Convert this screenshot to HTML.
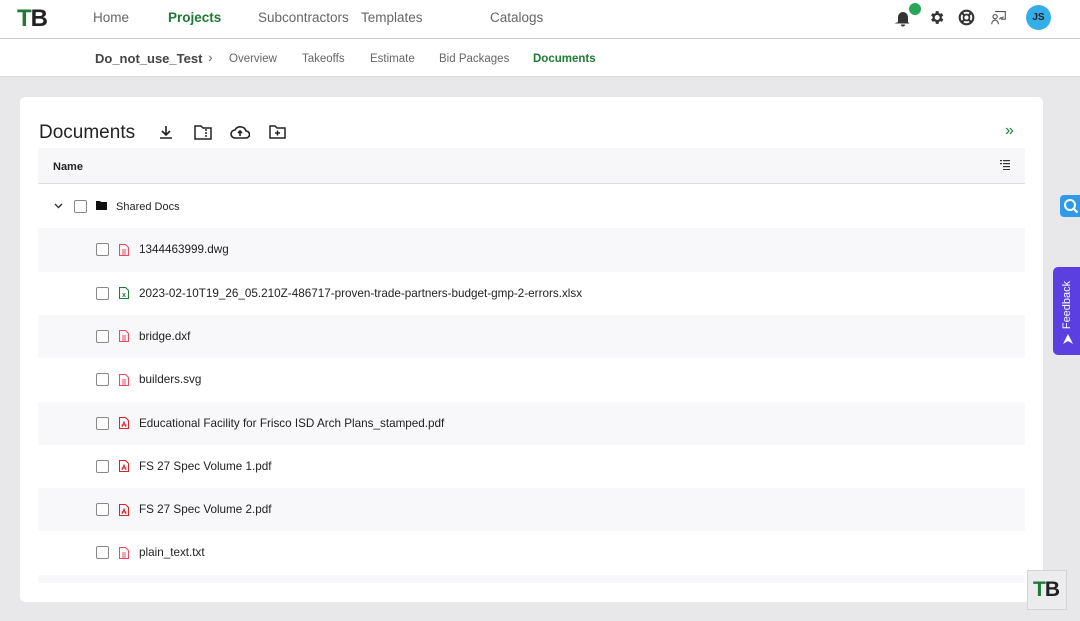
<!DOCTYPE html><html><head><style>
*{box-sizing:border-box;margin:0;padding:0}
body{width:1080px;height:621px;overflow:hidden;background:#e8e8eb;font-family:"Liberation Sans",sans-serif;position:relative}
.top{position:absolute;left:0;top:0;width:1080px;height:39px;background:#fff;border-bottom:1.5px solid #c9c9cf}
.logo{position:absolute;left:17px;top:5px;font-size:24px;font-weight:bold;letter-spacing:-1px}
.nav{position:absolute;top:10px;font-size:13.5px;color:#666}
.sub{position:absolute;left:0;top:39px;width:1080px;height:38px;background:#fff;border-bottom:1px solid #d8d8dc}
.s{position:absolute;top:14px;font-size:11.5px;color:#666}
.card{position:absolute;left:20px;top:97px;width:1023px;height:505px;background:#fff;border-radius:5px;overflow:hidden}
.row{position:absolute;left:18px;width:987px;height:43.3px}
.row.g{background:#f8f8fa}
.cb{position:absolute;width:13px;height:13px;border:1.5px solid #888;border-radius:2px;background:#fff}
.t{position:absolute;font-size:11.7px;color:#222}
.fi{position:absolute;width:10px;height:12px}
</style></head><body>
<div class="top">
<div class="logo"><span style="color:#1f7a34">T</span><span style="color:#222">B</span></div>
<div class="nav" style="left:93px">Home</div>
<div class="nav" style="left:168px;color:#1f7a34;font-weight:bold">Projects</div>
<div class="nav" style="left:258px">Subcontractors</div>
<div class="nav" style="left:361px">Templates</div>
<div class="nav" style="left:490px">Catalogs</div>
<svg style="position:absolute;left:894px;top:9px" width="18" height="18" viewBox="0 0 18 18"><path d="M4 13V8a5 5 0 0 1 10 0v5l1.5 1.5h-15z M7 15.5h4a2 2 0 0 1-4 0z" fill="#333"/></svg>
<div style="position:absolute;left:909px;top:3px;width:12px;height:12px;border-radius:6px;background:#2aa55a"></div>
<svg style="position:absolute;left:928px;top:9px" width="17" height="17" viewBox="0 0 24 24"><path fill="#333" d="M19.4 13a7.5 7.5 0 0 0 0-2l2.1-1.6-2-3.5-2.5 1a7 7 0 0 0-1.7-1L15 3h-4l-.4 2.9a7 7 0 0 0-1.7 1l-2.5-1-2 3.5L6.6 11a7.5 7.5 0 0 0 0 2l-2.1 1.6 2 3.5 2.5-1a7 7 0 0 0 1.7 1L11 21h4l.4-2.9a7 7 0 0 0 1.7-1l2.5 1 2-3.5zM13 15.5a3.5 3.5 0 1 1 0-7 3.5 3.5 0 0 1 0 7z"/></svg>
<svg style="position:absolute;left:958px;top:9px" width="17" height="17" viewBox="0 0 20 20"><circle cx="10" cy="10" r="8" fill="none" stroke="#333" stroke-width="2.5"/><circle cx="10" cy="10" r="3.5" fill="none" stroke="#333" stroke-width="2"/><path d="M4 4l3.5 3.5M16 4l-3.5 3.5M4 16l3.5-3.5M16 16l-3.5-3.5" stroke="#333" stroke-width="2.5"/></svg>
<svg style="position:absolute;left:990px;top:9px" width="17" height="17" viewBox="0 0 20 20" fill="none" stroke="#555" stroke-width="1.3"><path d="M6 3h12v9h-5"/><circle cx="6" cy="9" r="2.5"/><path d="M2 18c0-3 2-5 4-5s4 2 4 5M11 12l2-2 1 1 2-2"/></svg>
<div style="position:absolute;left:1026px;top:5px;width:25px;height:25px;border-radius:13px;background:#34aee8;color:#222;font-size:10px;font-weight:bold;text-align:center;line-height:25px">JS</div>
</div>
<div class="sub">
<div class="s" style="left:95px;top:12px;font-size:13px;font-weight:bold;color:#444">Do_not_use_Test</div>
<div class="s" style="left:208px;top:10px;font-size:14px;color:#666">›</div>
<div class="s" style="left:229px">Overview</div>
<div class="s" style="left:302px">Takeoffs</div>
<div class="s" style="left:370px">Estimate</div>
<div class="s" style="left:439px">Bid Packages</div>
<div class="s" style="left:533px;color:#1f7a34;font-weight:bold">Documents</div>
</div>
<div class="card">
<div style="position:absolute;left:19px;top:25px;font-size:19px;color:#222">Documents</div>
<svg style="position:absolute;left:139px;top:28px" width="14" height="14" viewBox="0 0 14 14" stroke="#222" stroke-width="1.6" fill="none"><path d="M7 1v8M3 6l4 4 4-4M1 13h12"/></svg>
<svg style="position:absolute;left:174px;top:27px" width="18" height="16" viewBox="0 0 18 16" stroke="#222" stroke-width="1.5" fill="none"><path d="M1 2h6l2 2h8v11H1z"/><path d="M11 6h2M11 9h2M11 12h2" /></svg>
<svg style="position:absolute;left:210px;top:27px" width="20" height="15" viewBox="0 0 20 15" stroke="#222" stroke-width="1.6" fill="none"><path d="M5 14a4 4 0 0 1 0-8 6 6 0 0 1 11 1 3.5 3.5 0 0 1 0 7z"/><path d="M10 12V7M8 9l2-2 2 2"/></svg>
<svg style="position:absolute;left:249px;top:28px" width="17" height="14" viewBox="0 0 17 14" stroke="#222" stroke-width="1.5" fill="none"><path d="M1 1h5l2 2h8v10H1z"/><path d="M8.5 5.5v5M6 8h5"/></svg>
<div style="position:absolute;left:985px;top:25px;color:#1f7a34;font-size:16px">»</div>
<div style="position:absolute;left:18px;top:51px;width:987px;height:36px;background:#f7f7f9;border-bottom:1px solid #ddd"></div>
<div class="t" style="left:33px;top:64px;font-weight:bold;font-size:11px">Name</div>
<svg style="position:absolute;left:980px;top:63px" width="10" height="10" viewBox="0 0 10 10" fill="#333"><rect x="0" y="0" width="2" height="1.2"/><rect x="3" y="0" width="7" height="1.2"/><rect x="3" y="3" width="7" height="1.2"/><rect x="3" y="6" width="7" height="1.2"/><rect x="3" y="9" width="7" height="1"/><rect x="0" y="3" width="2" height="1.2"/></svg>
<svg style="position:absolute;left:34px;top:106px" width="9" height="6" viewBox="0 0 9 6"><path d="M1 1l3.5 3.5L8 1" stroke="#333" stroke-width="1.4" fill="none"/></svg>
<div class="cb" style="left:54px;top:103px"></div>
<svg style="position:absolute;left:76px;top:104px" width="11" height="9" viewBox="0 0 11 9"><path d="M0 0h4l1 1h6v8H0z" fill="#111"/></svg>
<div class="t" style="left:96px;top:104px;font-size:11px">Shared Docs</div>
<div id="rows"></div>
</div>
<div style="position:absolute;left:1060px;top:195px;width:20px;height:22px;background:#2f9be8;border-radius:4px 0 0 4px"><svg width="20" height="22" viewBox="0 0 20 22"><circle cx="10" cy="10" r="5" fill="none" stroke="#fff" stroke-width="2"/><path d="M13.5 13.5l4 4" stroke="#fff" stroke-width="2.2"/></svg></div>
<div style="position:absolute;left:1053px;top:267px;width:27px;height:88px;background:#5b3fe0;border-radius:5px 0 0 5px"></div>
<div style="position:absolute;left:1067px;top:305px;transform:translate(-50%,-50%) rotate(-90deg);color:#fff;font-size:11px;white-space:nowrap">Feedback</div>
<svg style="position:absolute;left:1062px;top:333px" width="12" height="12" viewBox="0 0 12 12"><path d="M6 1l5 10-5-3-5 3z" fill="#fff"/></svg>
<div style="position:absolute;left:1027px;top:570px;width:40px;height:40px;background:#ececee;border:1px solid #d4d4d6"><div style="position:absolute;left:5px;top:7px;font-size:21px;font-weight:bold;letter-spacing:-1px"><span style="color:#1f7a34">T</span><span style="color:#222">B</span></div></div>
<script>
var f=[["1344463999.dwg","d"],["2023-02-10T19_26_05.210Z-486717-proven-trade-partners-budget-gmp-2-errors.xlsx","x"],["bridge.dxf","d"],["builders.svg","d"],["Educational Facility for Frisco ISD Arch Plans_stamped.pdf","p"],["FS 27 Spec Volume 1.pdf","p"],["FS 27 Spec Volume 2.pdf","p"],["plain_text.txt","d"],["",""]];
var h="";f.forEach(function(r,i){var top=131.3+i*43.3;h+='<div class="row'+(i%2==0?' g':'')+'" style="top:'+top+'px;'+(r[0]?'':'height:8px')+'"></div>';if(!r[0])return;var c=r[1]=="x"?"#1f7a34":(r[1]=="p"?"#d8232a":"#e84a5f");var inner=r[1]=="x"?'<text x="5" y="10" font-size="7" fill="'+c+'" text-anchor="middle" font-family="Liberation Sans" font-weight="bold">x</text>':(r[1]=="p"?'<path d="M3 10l2-5 2 5M2.5 8h5" stroke="'+c+'" stroke-width="1" fill="none"/>':'<path d="M3 6h4M3 8h4M3 10h4" stroke="'+c+'" stroke-width="1"/>');h+='<div class="cb" style="left:76px;top:'+(top+15)+'px"></div><svg class="fi" style="left:99px;top:'+(top+15.5)+'px" viewBox="0 0 10 12"><path d="M.5.5h6l3 3v8h-9z" fill="none" stroke="'+c+'" stroke-width="1.1"/>'+inner+'</svg><div class="t" style="left:119px;top:'+(top+15)+'px">'+r[0]+'</div>';});
document.getElementById("rows").outerHTML=h;
</script>
</body></html>
